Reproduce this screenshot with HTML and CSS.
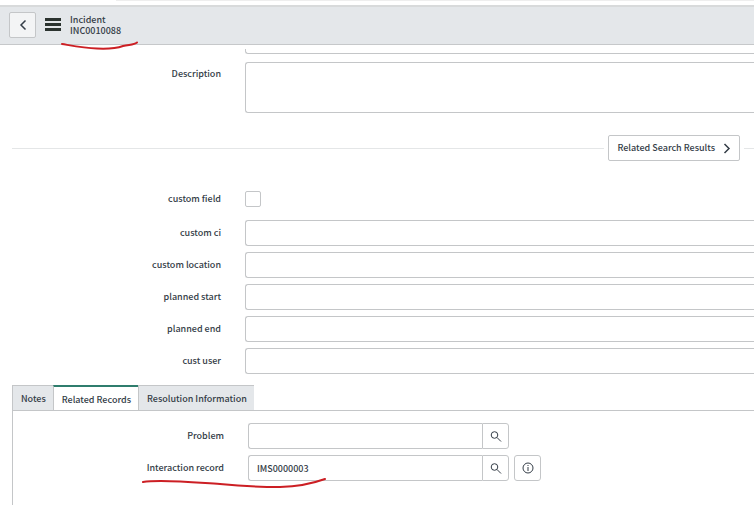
FILE: index.html
```
<!DOCTYPE html>
<html lang="en">
<head>
    <meta charset="utf-8">
    <title>Incident INC0010088</title>
    <link rel="stylesheet" href="styles.css">
</head>
<body>
    <div class="top-line"></div>
    <header class="header">
        <button class="back" type="button" aria-label="Back">
            <svg width="8" height="12" viewBox="0 0 8 12"><path d="M6.500 1.500 2 6l4.500 4.500" /></svg>
        </button>
        <button class="menu" type="button" aria-label="Menu">
            <svg width="16" height="13" viewBox="0 0 16 13"><path d="M0 0h16v3H0zM0 5h16v3H0zM0 10h16v3H0z" /></svg>
        </button>
        <h1 class="title">Incident<span class="number">INC0010088</span></h1>
        <svg class="mark mark-title" width="80" height="10" viewBox="0 0 80 10">
            <path d="M2 3C14 5 24 7 37 7.500C48 8 56 7.500 63 5C69 3.500 74 4 77 1.500" />
        </svg>
    </header>

    <main>
        <form>
            <div class="row">
                <span class="label"></span>
                <input class="field field-cut" type="text" aria-label="Short description">
            </div>
            <div class="row row-top">
                <label class="label" for="description">Description</label>
                <textarea class="field area" id="description"></textarea>
            </div>

            <div class="divider">
                <button class="search-results" type="button">Related Search Results
                    <svg width="8" height="12" viewBox="0 0 8 12"><path d="M1.500 2 6 6.500l-4.500 4.500" /></svg>
                </button>
            </div>

            <div class="fields">
                <div class="row row-check">
                    <label class="label" for="custom-field">custom field</label>
                    <input class="check" type="checkbox" id="custom-field">
                </div>
                <div class="row">
                    <label class="label" for="custom-ci">custom ci</label>
                    <input class="field" type="text" id="custom-ci">
                </div>
                <div class="row">
                    <label class="label" for="custom-location">custom location</label>
                    <input class="field" type="text" id="custom-location">
                </div>
                <div class="row">
                    <label class="label" for="planned-start">planned start</label>
                    <input class="field" type="text" id="planned-start">
                </div>
                <div class="row">
                    <label class="label" for="planned-end">planned end</label>
                    <input class="field" type="text" id="planned-end">
                </div>
                <div class="row">
                    <label class="label" for="cust-user">cust user</label>
                    <input class="field" type="text" id="cust-user">
                </div>
            </div>

            <div class="tabs" role="tablist">
                <button class="tab" type="button" role="tab">Notes</button>
                <button class="tab active" type="button" role="tab" aria-selected="true">Related Records</button>
                <button class="tab" type="button" role="tab">Resolution Information</button>
            </div>
            <section class="panel">
                <div class="row">
                    <label class="label" for="problem">Problem</label>
                    <div class="lookup">
                        <input class="field" type="text" id="problem">
                        <button class="icon-btn" type="button" aria-label="Look up problem">
                            <svg width="12" height="12" viewBox="0 0 12 12"><circle cx="4.500" cy="5" r="3.300" /><path d="M7 7.500l4 4" /></svg>
                        </button>
                    </div>
                </div>
                <div class="row">
                    <label class="label" for="interaction">Interaction record</label>
                    <div class="lookup">
                        <input class="field" type="text" id="interaction" value="IMS0000003">
                        <button class="icon-btn" type="button" aria-label="Look up interaction">
                            <svg width="12" height="12" viewBox="0 0 12 12"><circle cx="4.500" cy="5" r="3.300" /><path d="M7 7.500l4 4" /></svg>
                        </button>
                    </div>
                    <button class="icon-btn info" type="button" aria-label="Preview record">
                        <svg width="12" height="12" viewBox="0 0 12 12"><circle cx="6" cy="6" r="5" /><path d="M6 5v4M6 3v1" /></svg>
                    </button>
                </div>
                <svg class="mark mark-record" width="190" height="14" viewBox="0 0 190 14">
                    <path d="M3 4C20 1 50 4 80 6C110 9 125 9 140 9C160 8.500 174 5 185 1" />
                </svg>
            </section>
        </form>
    </main>
</body>
</html>
```
FILE: styles.css
```
* {
    box-sizing: border-box;
}
body {
    margin: 0;
    background: #fff;
    color: #343d47;
    font-family: "Noto Sans CJK SC", "Noto Sans", sans-serif;
    font-size: 9px;
    font-weight: 500;
    line-height: 14px;
    overflow: hidden;
}
button,
input,
textarea {
    font: inherit;
    color: inherit;
    margin: 0;
}
button {
    display: flex;
    align-items: center;
    justify-content: center;
    padding: 0;
    background: #fff;
    border: 1px solid #c4c6c8;
    border-radius: 2px;
    cursor: pointer;
}
svg {
    display: block;
    fill: none;
    stroke: #343d47;
}

/* header */
.top-line {
    height: 5px;
    margin-left: 116px;
    border-top: 1px solid #eee;
}
.header {
    position: relative;
    display: flex;
    align-items: center;
    height: 40px;
    padding: 0 9px 2px;
    background: #e4e7ea;
    border-top: 2px solid #d8dadb;
    border-bottom: 1px solid #c6c8ca;
}
.back {
    width: 27px;
    height: 26px;
    background: #f3f4f5;
}
.back svg,
.search-results svg {
    stroke-width: 1.5;
}
.menu {
    margin: 0 9px;
    background: none;
    border: none;
}
.menu svg {
    fill: #2b332f;
    stroke: none;
}
.title {
    margin: 0;
    font-size: 9px;
    font-weight: 500;
    line-height: 11px;
}
.number {
    display: block;
}

/* form */
.row {
    display: flex;
    align-items: center;
}
.row-top {
    align-items: flex-start;
    margin-top: 8px;
}
.row-top .label {
    padding-top: 5px;
}
.label {
    width: 221px;
    margin-right: 24px;
    text-align: right;
}
.field {
    flex: 1;
    min-width: 0;
    height: 26px;
    padding: 0 8px;
    background: #fff;
    border: 1px solid #c4c6c8;
    border-right: none;
    border-radius: 3px 0 0 3px;
}
.field-cut {
    height: 5px;
    margin-top: 4px;
    border-top: none;
    border-top-left-radius: 0;
}
.area {
    height: 51px;
    resize: none;
}
.check {
    appearance: none;
    width: 16px;
    height: 16px;
    background: #fff;
    border: 1px solid #c4c6c8;
    border-radius: 2px;
}
.divider {
    display: flex;
    align-items: center;
    gap: 4px;
    margin: 22px 0 27px 12px;
}
.divider::before,
.divider::after {
    content: "";
    height: 1px;
    background: #e4e6e7;
}
.divider::before {
    flex: 1;
}
.divider::after {
    width: 10px;
}
.search-results {
    gap: 8px;
    height: 26px;
    padding: 0 8px;
}
.fields {
    display: grid;
    gap: 6px;
}
.row-check {
    min-height: 22px;
    margin-bottom: 4px;
}

/* tabs */
.tabs {
    display: flex;
    margin: 11px 0 0 12px;
}
.tab {
    height: 25px;
    padding: 2px 7px 0 8px;
    background: #e4e7ea;
    border-width: 1px 0 0 1px;
    border-radius: 0;
}
.tab.active {
    position: relative;
    height: 26px;
    margin-bottom: -1px;
    padding-top: 1px;
    background: #fff;
    border-top: 2px solid #2f7d6d;
}
.panel {
    position: relative;
    display: grid;
    gap: 6px;
    align-content: start;
    min-height: 95px;
    margin-left: 12px;
    padding-top: 12px;
    border-top: 1px solid #c4c6c8;
    border-left: 1px solid #c4c6c8;
}
.panel .label {
    width: 211px;
}
.lookup {
    display: flex;
    flex: 0 1 261px;
}
.icon-btn {
    width: 27px;
    height: 26px;
    border-radius: 0 3px 3px 0;
}
.info {
    margin-left: 5px;
    border-radius: 3px;
}

/* red pen marks */
.mark {
    position: absolute;
    stroke: #cc1f24;
    stroke-width: 2;
    stroke-linecap: round;
}
.mark-title {
    left: 60px;
    top: 34px;
}
.mark-record {
    left: 127px;
    top: 67px;
}
```
